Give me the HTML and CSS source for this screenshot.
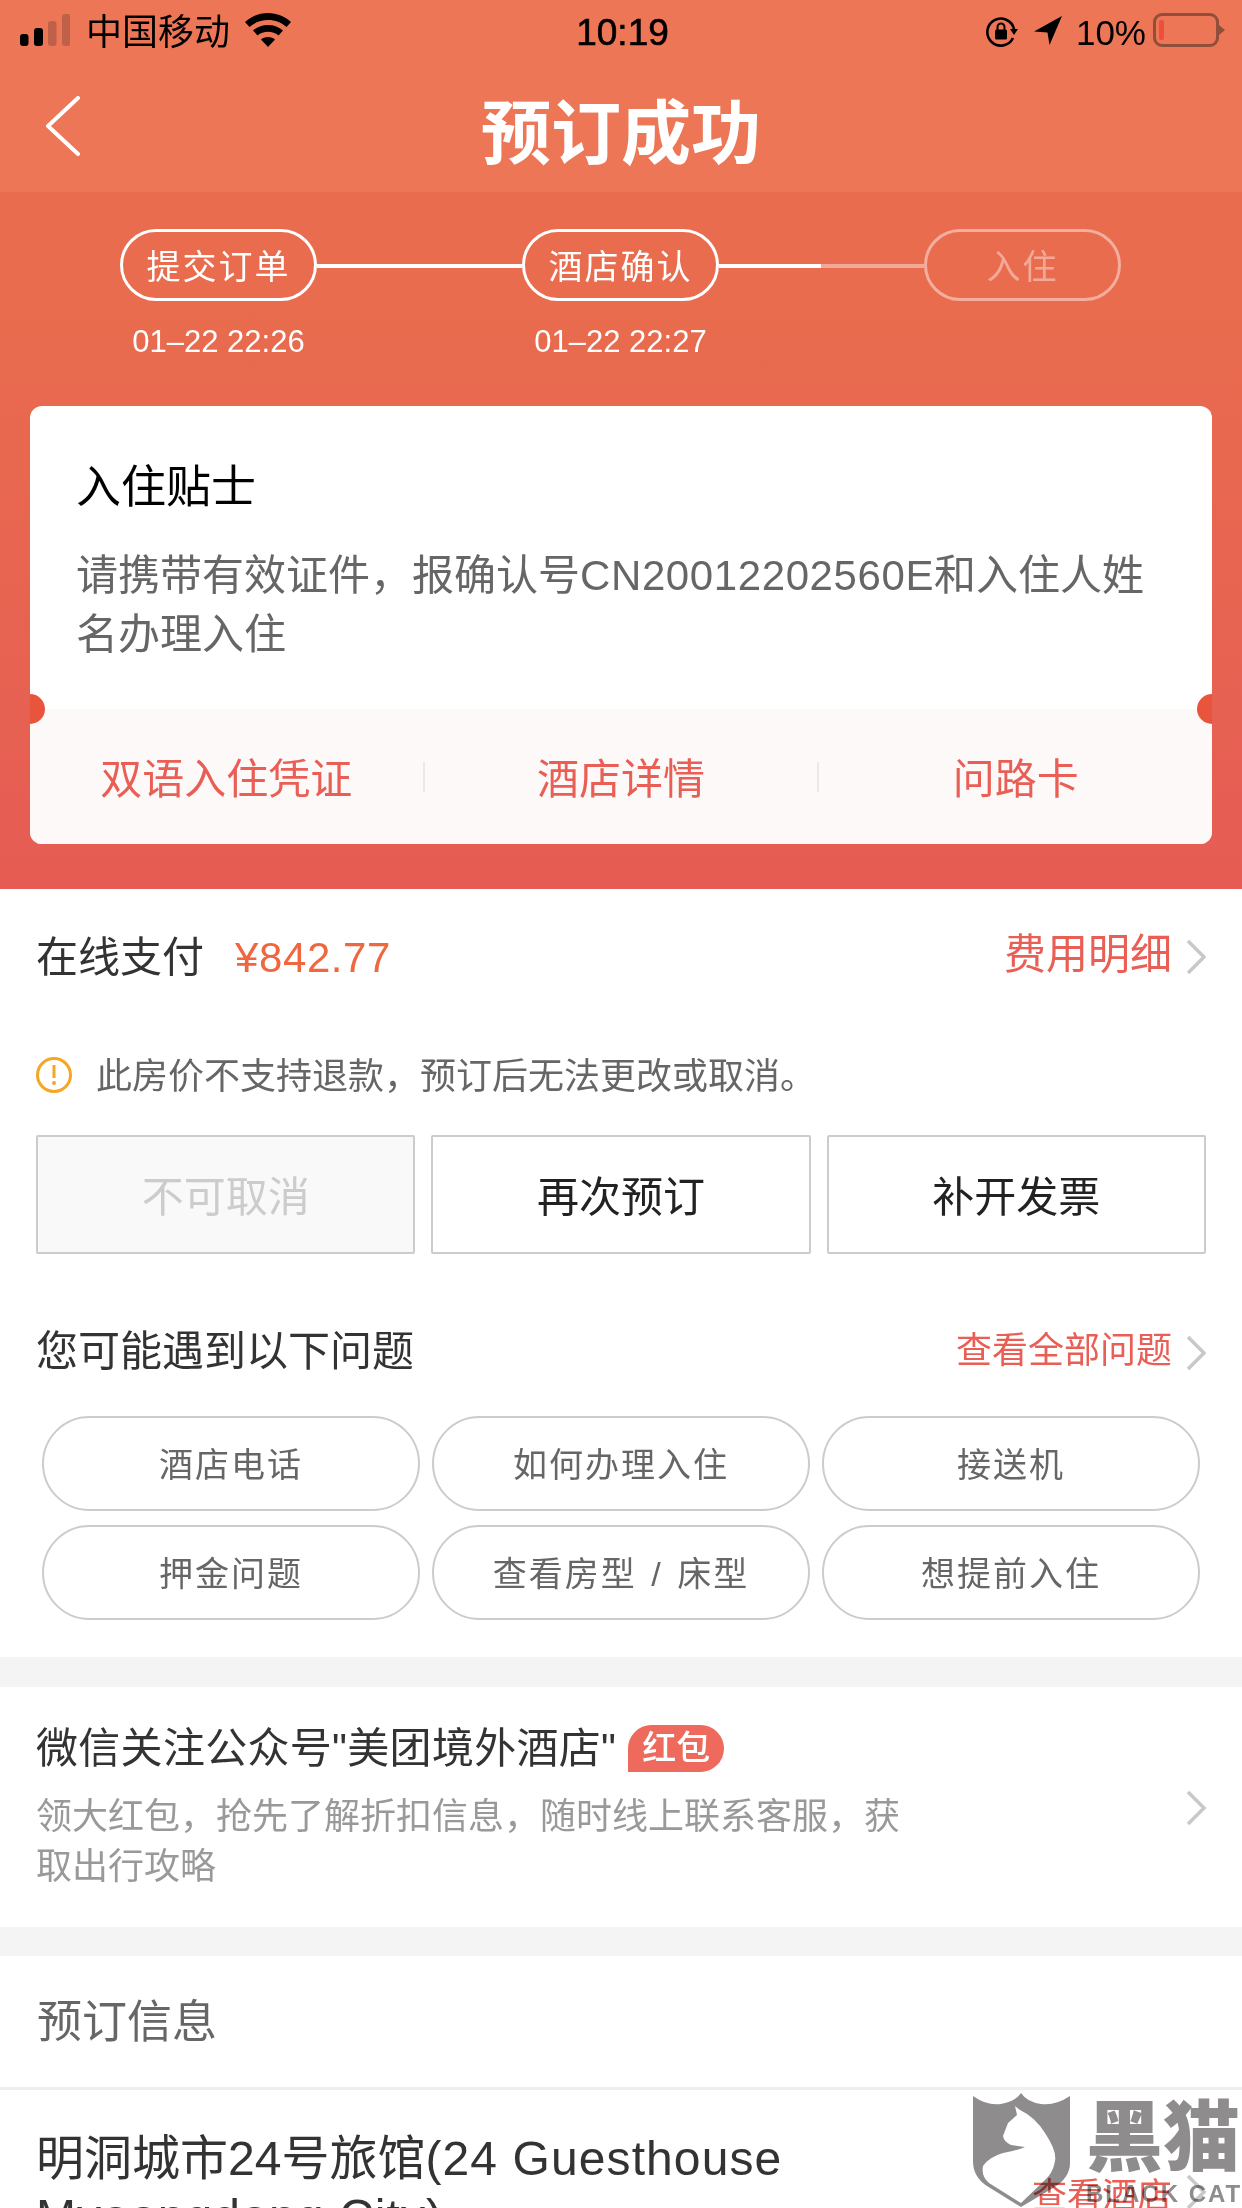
FILE: index.html
```html
<!DOCTYPE html>
<html lang="zh-CN">
<head>
<meta charset="utf-8">
<title>预订成功</title>
<link rel="stylesheet" href="styles.css">
</head>
<body>
<div class="screen">
  <section class="hero">
    <header class="top">
      <div class="status">
        <div class="status-left">
          <svg class="signal" width="50" height="32" viewBox="0 0 50 32"><rect x="0" y="20" width="8.5" height="12" rx="3" fill="#000"/><rect x="14" y="14" width="9" height="18" rx="3" fill="#000"/><rect x="28" y="7" width="8.5" height="25" rx="3" fill="#bf6148"/><rect x="42" y="0" width="8.5" height="32" rx="3" fill="#bf6148"/></svg>
          <span class="carrier">中国移动</span>
          <svg class="wifi" width="46" height="34" viewBox="0 0 46 34"><path d="M23 0C14 0 6 3.500 0 9l4.500 5C9.500 9.500 16 7 23 7s13.500 2.500 18.500 7L46 9C40 3.500 32 0 23 0z" fill="#000"/><path d="M23 12c-6 0-11 2-15 5.500l4.500 5C15.500 20 19 18.800 23 18.800S30.500 20 33.500 22.500l4.500-5C34 14 29 12 23 12z" fill="#000"/><path d="M23 24c-3 0-5.500 1-7 2.500L23 34l7-7.500C28.500 25 26 24 23 24z" fill="#000"/></svg>
        </div>
        <div class="clock">10:19</div>
        <div class="status-right">
          <svg class="lock" width="32" height="30" viewBox="0 0 32 30"><path d="M27 21A13.500 13.500 0 1 1 28 12" fill="none" stroke="#000" stroke-width="2.600"/><path d="M24 12h8l-4 6z" fill="#000"/><rect x="9" y="12.500" width="12" height="10" rx="1.500" fill="#000"/><path d="M11.500 13V10a3.500 3.500 0 0 1 7 0v3" fill="none" stroke="#000" stroke-width="2"/></svg>
          <svg class="arrow" width="28" height="29" viewBox="0 0 27 28"><path d="M27 0L0 15l13 1 2 12z" fill="#000"/></svg>
          <span class="pct">10%</span>
          <div class="battery"><span class="battery-level"></span></div>
          <span class="battery-cap"></span>
        </div>
      </div>
      <div class="nav">
        <svg class="back" width="36" height="60" viewBox="0 0 36 60"><path d="M33 2L3 30l30 28" fill="none" stroke="#fff" stroke-width="4" stroke-linecap="round" stroke-linejoin="round"/></svg>
        <h1 class="title">预订成功</h1>
        <span></span>
      </div>
    </header>

    <div class="steps">
      <div class="step-row">
        <span class="pill">提交订单</span>
        <span class="link-line"></span>
        <span class="pill">酒店确认</span>
        <span class="link-line link-half"></span>
        <span class="pill pill-off">入住</span>
      </div>
      <div class="time-row">
        <span class="time">01–22 22:26</span>
        <span class="time">01–22 22:27</span>
        <span class="time"></span>
      </div>
    </div>

    <article class="card">
      <div class="card-body">
        <h2 class="card-title">入住贴士</h2>
        <p class="card-text">请携带有效证件，报确认号<span class="latin">CN20012202560E</span>和入住人姓名办理入住</p>
      </div>
      <div class="card-foot">
        <a class="foot-link">双语入住凭证</a>
        <a class="foot-link foot-sep">酒店详情</a>
        <a class="foot-link foot-sep">问路卡</a>
      </div>
      <span class="notch notch-l"></span>
      <span class="notch notch-r"></span>
    </article>
  </section>

  <section class="panel pay">
    <div class="row-between pay-row">
      <div class="pay-left"><span class="label">在线支付</span><span class="price">¥842.77</span></div>
      <a class="more more-lg">费用明细<svg class="chev" width="20" height="36" viewBox="0 0 20 36"><path d="M2 2l16 16L2 34" fill="none" stroke="#c8c8cc" stroke-width="3.500"/></svg></a>
    </div>
    <div class="warn">
      <svg width="36" height="36" viewBox="0 0 36 36"><circle cx="18" cy="18" r="16.500" fill="none" stroke="#f5a623" stroke-width="3"/><path d="M18 8v13" stroke="#f5a623" stroke-width="3"/><circle cx="18" cy="26" r="2" fill="#f5a623"/></svg>
      <span class="warn-text">此房价不支持退款，预订后无法更改或取消。</span>
    </div>
    <div class="actions">
      <button class="btn btn-off">不可取消</button>
      <button class="btn">再次预订</button>
      <button class="btn">补开发票</button>
    </div>
    <div class="row-between faq-head">
      <span class="label">您可能遇到以下问题</span>
      <a class="more">查看全部问题<svg class="chev" width="20" height="36" viewBox="0 0 20 36"><path d="M2 2l16 16L2 34" fill="none" stroke="#c8c8cc" stroke-width="3.500"/></svg></a>
    </div>
    <div class="faq">
      <span class="faq-item">酒店电话</span>
      <span class="faq-item">如何办理入住</span>
      <span class="faq-item">接送机</span>
      <span class="faq-item">押金问题</span>
      <span class="faq-item faq-wide">查看房型 / 床型</span>
      <span class="faq-item">想提前入住</span>
    </div>
  </section>

  <section class="panel promo">
    <div class="promo-main">
      <div class="promo-title"><span class="promo-name">微信关注公众号"美团境外酒店"</span><span class="badge">红包</span></div>
      <p class="promo-text">领大红包，抢先了解折扣信息，随时线上联系客服，获取出行攻略</p>
    </div>
    <svg class="chev-promo" width="20" height="36" viewBox="0 0 20 36"><path d="M2 2l16 16L2 34" fill="none" stroke="#c8c8cc" stroke-width="3.500"/></svg>
  </section>

  <section class="panel info">
    <h3 class="info-title">预订信息</h3>
    <div class="hotel">
      <div class="hotel-name">明洞城市24号旅馆<span class="hotel-en">(24 Guesthouse Myeongdong City)</span></div>
      <a class="hotel-link">查看酒店<svg class="chev" width="20" height="36" viewBox="0 0 20 36"><path d="M2 2l16 16L2 34" fill="none" stroke="#c8c8cc" stroke-width="3.500"/></svg></a>
    </div>
  </section>

  <div class="mark">
    <svg class="mark-shield" width="97" height="114" viewBox="0 0 97 114"><path d="M0 3Q14 13 28 11Q42 9 48 0Q54 9 68 11Q82 13 97 3V70Q97 85 80 95L48 114L14 93Q0 84 0 68Z" fill="#8e8c8d"/><path d="M42 13L47 17Q62 24 72 40Q84 58 82 68Q80 80 72 87L48 110L16 90Q8 83 10 73Q16 64 30 60Q46 57 52 54L38 52Q31 49 30 43L35 30L44 22Z" fill="#fff"/></svg>
    <div class="mark-words">
      <span class="mark-cn">黑猫</span>
      <span class="mark-en">BLACK CAT</span>
    </div>
  </div>
</div>
</body>
</html>
```

FILE: styles.css
```css
* { box-sizing: border-box; }
html, body { margin: 0; padding: 0; background: #fff; }
body { font-family: "Liberation Sans", "Noto Sans CJK SC", sans-serif; color: #333; }
h1, h2, h3, p { margin: 0; font-weight: 400; }
button { font-family: inherit; }

.screen { position: relative; width: 1242px; height: 2208px; overflow: hidden; background: #f4f4f4; }

.hero { height: 889px; background: linear-gradient(#e96c4e 300px, #e65c54 100%); }
.top { height: 192px; background: #ec7656; }

.status { height: 60px; padding: 0 17px 0 20px; display: grid; grid-template-columns: 1fr auto 1fr; align-items: center; color: #000; }
.status-left { display: flex; align-items: center; }
.carrier { font-size: 36px; line-height: 44px; margin: 5px 0 0 16px; }
.wifi { margin-left: 15px; }
.clock { font-size: 37px; line-height: 44px; margin-top: 5px; -webkit-text-stroke: .6px #000; }
.status-right { display: flex; align-items: center; justify-content: flex-end; }
.lock { margin-top: 3px; }
.arrow { margin-left: 16px; }
.pct { font-size: 35px; line-height: 44px; margin: 5px 0 0 14px; }
.battery { width: 66px; height: 34px; margin-left: 7px; border: 3px solid #8f4f3b; border-radius: 9px; padding: 4px 3px; }
.battery-level { display: block; width: 5px; height: 100%; border-radius: 2px; background: #ee4f3c; }
.battery-cap { width: 6px; height: 10px; background: #8f4f3b; clip-path: polygon(0 0, 100% 50%, 0 100%); }

.nav { height: 132px; padding: 0 45px; display: grid; grid-template-columns: 1fr auto 1fr; align-items: center; }
.title { margin-top: 18px; color: #fff; font-size: 70px; line-height: 92px; font-weight: 700; }

.steps { padding: 37px 121px 0 120px; }
.step-row { display: flex; align-items: center; height: 72px; }
.pill { flex: none; width: 197px; height: 72px; padding-bottom: 2px; border: 3px solid #fff; border-radius: 36px; color: #fff; font-size: 34px; letter-spacing: 2px; display: flex; align-items: center; justify-content: center; }
.pill-off { color: rgba(255, 255, 255, .42); border-color: rgba(255, 255, 255, .45); }
.link-line { flex: 1; height: 4px; background: #fff; margin-top: 2px; }
.link-half { background: linear-gradient(90deg, #fff 50%, rgba(255, 255, 255, .42) 50%); }
.time-row { display: flex; justify-content: space-between; margin-top: 23px; }
.time { width: 197px; text-align: center; color: #fff; font-size: 31px; line-height: 36px; }

.card { position: relative; margin: 46px 30px 0; height: 438px; border-radius: 12px; background: #fff; overflow: hidden; }
.card-body { height: 303px; padding: 52px 46px 0; }
.card-title { font-size: 45px; line-height: 60px; color: #000; }
.card-text { margin-top: 28px; font-size: 42px; line-height: 59px; color: #666; }
.latin { letter-spacing: .6px; }
.card-foot { height: 135px; background: #fdf9f8; display: flex; align-items: center; }
.foot-link { flex: 1; height: 30px; display: flex; align-items: center; justify-content: center; color: #e95f55; font-size: 42px; padding-bottom: 2px; }
.foot-sep { border-left: 2px solid #ece8e6; }
.notch { position: absolute; top: 288px; width: 30px; height: 30px; border-radius: 50%; background: #e8553c; }
.notch-l { left: -15px; }
.notch-r { right: -15px; }

.panel { background: #fff; }
.pay { height: 768px; padding: 0 36px; }
.row-between { display: flex; align-items: center; justify-content: space-between; }
.pay-row { height: 132px; }
.pay-left { display: flex; align-items: center; margin-top: 5px; }
.label { font-size: 42px; line-height: 60px; color: #333; }
.price { margin-left: 31px; font-size: 42px; letter-spacing: .6px; color: #f0663f; }
.more { display: flex; align-items: center; color: #e95f55; font-size: 36px; line-height: 50px; }
.more-lg { font-size: 42px; }
.chev { flex: none; margin: 4px 0 0 14px; }
.warn { margin-top: 27px; height: 54px; display: flex; align-items: center; gap: 24px; font-size: 36px; color: #666; }
.warn-text { margin-top: -5px; }
.actions { margin-top: 33px; display: grid; grid-template-columns: repeat(3, 1fr); gap: 16px; }
.btn { height: 119px; border: 2px solid #ccc; border-radius: 2px; background: #fff; color: #222; font-size: 42px; padding: 0 0 3px; }
.btn-off { background: #f9f9f9; color: #ccc; }
.faq-head { margin-top: 67px; height: 60px; }
.faq-head .label { margin-top: 1px; }
.faq { margin: 35px 6px 0; display: grid; grid-template-columns: repeat(3, 1fr); gap: 14px 12px; }
.faq-item { height: 95px; padding-bottom: 2px; border: 2px solid #ccc; border-radius: 48px; display: flex; align-items: center; justify-content: center; color: #666; font-size: 34px; letter-spacing: 2px; }
.faq-wide { word-spacing: 3px; }

.promo { margin-top: 30px; height: 240px; padding: 31px 36px 0; display: flex; justify-content: space-between; }
.promo-title { height: 60px; display: flex; align-items: center; font-size: 42px; color: #333; }
.promo-name { letter-spacing: .3px; margin-top: -8px; }
.badge { margin-left: 12px; width: 96px; height: 47px; border-radius: 24px 24px 24px 0; background: #ee6a5c; color: #fff; font-size: 34px; font-weight: 500; line-height: 47px; text-align: center; }
.promo-text { margin-top: 14px; width: 880px; font-size: 36px; line-height: 50px; color: #999; }
.chev-promo { flex: none; margin-top: 72px; }

.info { margin-top: 29px; height: 260px; }
.info-title { height: 134px; padding: 37px 37px 0; border-bottom: 3px solid #eee; font-size: 45px; line-height: 60px; color: #666; }
.hotel { padding: 40px 36px 0; display: flex; justify-content: space-between; }
.hotel-name { width: 860px; font-size: 48px; line-height: 58px; color: #333; }
.hotel-en { letter-spacing: 1.1px; }
.hotel-link { margin-top: 37px; height: 50px; display: flex; align-items: center; color: #e95f55; font-size: 35px; white-space: nowrap; }
.hotel-link .chev { margin-top: 0; }

.mark { position: absolute; left: 973px; top: 2093px; width: 269px; height: 115px; display: flex; gap: 16px; mix-blend-mode: multiply; }
.mark-shield { flex: none; }
.mark-words { display: flex; flex-direction: column; color: #8e8c8d; }
.mark-cn { font-size: 77px; line-height: 90px; font-weight: 900; white-space: nowrap; }
.mark-en { font-family: "Liberation Sans", sans-serif; font-size: 24px; line-height: 22px; font-weight: 700; letter-spacing: 2px; white-space: nowrap; }
```
